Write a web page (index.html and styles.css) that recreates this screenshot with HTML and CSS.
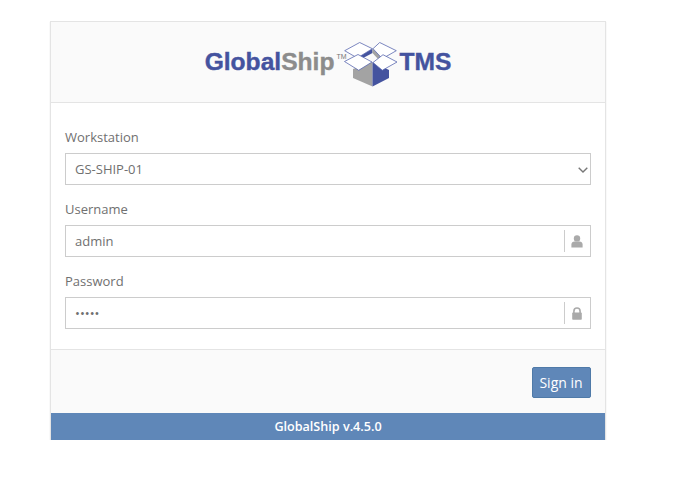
FILE: index.html
```html
<!DOCTYPE html>
<html lang="en">
<head>
    <meta charset="UTF-8">
    <meta name="viewport" content="width=device-width, initial-scale=1.0">
    <title>GlobalShip TMS - Sign in</title>
    <link rel="stylesheet" href="styles.css">
</head>
<body>
    <div class="login-card">
        <div class="card-header">
            <div class="logo">
                <span class="logo-blue">Global</span><span class="logo-grey">Ship</span>
                <span class="logo-tm">TM</span>
                <svg class="logo-box" width="54" height="45" viewBox="0 0 54 45">
                    <!-- inside of the box -->
                    <polygon points="14,15 28.5,6.5 28.5,11 21,15 15,18" fill="#44539f"/>
                    <polygon points="28.5,6.5 38.5,15 34,17 28.5,11" fill="#a3a3a3"/>
                    <!-- sides -->
                    <polygon points="9,27 28.5,20 28.5,44.5 9,36" fill="#a3a3a3"/>
                    <polygon points="28.5,20 45,28 45,36 28.5,44.5" fill="#44539f"/>
                    <!-- flaps -->
                    <g fill="#fff" stroke="#5a68b0" stroke-width="0.8">
                        <polygon points="0.7,8.7 15.7,0.5 28.3,6.7 13.3,16"/>
                        <polygon points="29,6.7 35.7,0.5 52.3,8.7 38.3,16.7"/>
                        <polygon points="0.5,19.5 14,12.5 28,20 14.7,28.3"/>
                        <polygon points="29,20.5 39,12.7 53,20 38.3,28.3"/>
                    </g>
                </svg>
                <span class="logo-blue logo-tms">TMS</span>
            </div>
        </div>

        <form class="card-body">
            <label class="field-label" for="workstation">Workstation</label>
            <div class="select-wrap">
                <select id="workstation">
                    <option>GS-SHIP-01</option>
                </select>
                <svg class="select-arrow" width="10" height="6" viewBox="0 0 10 6"><path d="M0.7 0.7L5 5L9.3 0.7" fill="none" stroke="#777" stroke-width="1.4"/></svg>
            </div>

            <label class="field-label" for="username">Username</label>
            <div class="input-wrap">
                <input id="username" type="text" value="admin">
                <span class="input-icon">
                    <svg width="12" height="13" viewBox="0 0 12 13"><circle cx="6" cy="3.4" r="3.2" fill="#aaa"/><path d="M0.4 12.4V9.6C0.4 7.7 1.8 6.6 3.4 6.6H8.6C10.2 6.6 11.6 7.7 11.6 9.6V12.4Z" fill="#aaa"/></svg>
                </span>
            </div>

            <label class="field-label" for="password">Password</label>
            <div class="input-wrap">
                <input id="password" type="password" value="admin">
                <span class="input-icon">
                    <svg width="12" height="13" viewBox="0 0 12 13"><path d="M2.9 6V4.2C2.9 2.4 4.2 1 6 1S9.1 2.4 9.1 4.2V6" fill="none" stroke="#aaa" stroke-width="1.6"/><rect x="1.2" y="5.6" width="9.6" height="7.2" rx="0.8" fill="#aaa"/></svg>
                </span>
            </div>
        </form>

        <div class="card-actions">
            <button class="btn-signin" type="button">Sign in</button>
        </div>
        <div class="version-bar">GlobalShip v.4.5.0</div>
    </div>
</body>
</html>
```

FILE: styles.css
```css
body {
    margin: 0;
    padding: 21px 0 0 50px;
    background: #fff;
    font-family: "Open Sans", sans-serif;
    font-size: 13px;
    color: #707070;
}
.login-card {
    width: 554px;
    border: 1px solid #e4e4e4;
    border-bottom: 0;
    box-shadow: 0 1px 1px rgba(0, 0, 0, 0.15);
    background: #fff;
}
.card-header {
    height: 80px;
    background: #fafafa;
    border-bottom: 1px solid #e4e4e4;
    display: flex;
    align-items: center;
    justify-content: center;
}
.logo {
    display: flex;
    align-items: center;
    height: 46px;
    font-family: "Liberation Sans", Arial, sans-serif;
    font-weight: bold;
    font-size: 24.6px;
    line-height: 48px;
    -webkit-text-stroke: 0.4px;
}
.logo-blue { color: #44539f; }
.logo-grey { color: #8c8c8c; }
.logo-tm {
    width: 8px;
    margin: 14px 0 0 2px;
    align-self: flex-start;
    font-size: 7px;
    font-weight: normal;
    line-height: 8px;
    color: #777;
    -webkit-text-stroke: 0;
}
.logo-box {
    align-self: flex-start;
    margin-top: 3px;
}
.logo-tms {
    margin-left: 1px;
}
.card-body {
    padding: 25px 14px 20px;
}
.field-label {
    display: block;
    line-height: 18px;
    margin-bottom: 7px;
}
.select-wrap {
    position: relative;
    height: 32px;
    margin-bottom: 15px;
}
.select-wrap select {
    display: block;
    width: 100%;
    height: 100%;
    padding: 0 9px;
    border: 1px solid #ccc;
    border-radius: 0;
    background: #fff;
    appearance: none;
    font-family: inherit;
    font-size: 13px;
    color: #707070;
}
.select-arrow {
    position: absolute;
    top: 14px;
    right: 3px;
}
.input-wrap {
    display: flex;
    align-items: center;
    height: 32px;
    margin-bottom: 15px;
    border: 1px solid #ccc;
    box-sizing: border-box;
}
.input-wrap:last-child {
    margin-bottom: 0;
}
.input-wrap input {
    flex: 1;
    min-width: 0;
    height: 100%;
    box-sizing: border-box;
    padding: 0 9px;
    border: 0;
    background: transparent;
    font-family: inherit;
    font-size: 13px;
    color: #707070;
}
.input-icon {
    display: flex;
    align-items: center;
    justify-content: center;
    width: 24px;
    height: 22px;
    padding-right: 1px;
    border-left: 1px solid #ccc;
}
.card-actions {
    display: flex;
    justify-content: flex-end;
    height: 64px;
    box-sizing: border-box;
    padding: 17px 14px 0;
    background: #fafafa;
    border-top: 1px solid #e4e4e4;
}
.btn-signin {
    width: 59px;
    height: 31px;
    padding: 0 1px 0 0;
    border: 1px solid #4f7aa8;
    border-radius: 2px;
    background: #5f87b8;
    color: #fff;
    font-family: inherit;
    font-size: 14px;
}
.version-bar {
    height: 27px;
    line-height: 27px;
    background: #5f87b8;
    color: #fff;
    text-align: center;
    font-weight: 600;
    font-size: 12.6px;
}
```
